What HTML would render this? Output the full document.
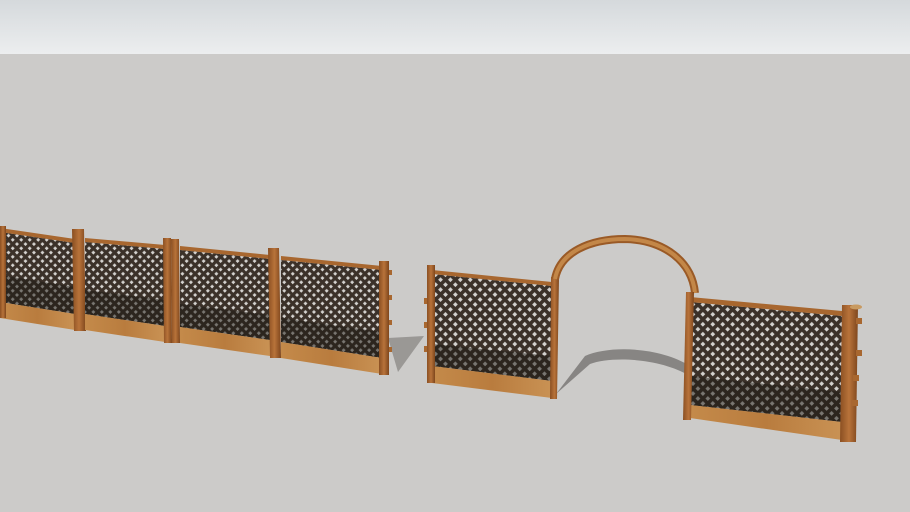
<!DOCTYPE html>
<html><head><meta charset="utf-8"><style>
html,body{margin:0;padding:0;width:910px;height:512px;overflow:hidden;background:#cccbc9}
svg{display:block}
</style></head><body>
<svg width="910" height="512" viewBox="0 0 910 512" xmlns="http://www.w3.org/2000/svg">
<defs>
<linearGradient id="sky" x1="0" y1="0" x2="0" y2="1">
<stop offset="0" stop-color="#d5d9dc"/><stop offset="1" stop-color="#eceeef"/>
</linearGradient>
<pattern id="lat" patternUnits="userSpaceOnUse" width="6" height="6" patternTransform="rotate(45)">
<rect width="6" height="6" fill="#d4d2cf"/>
<rect width="6" height="3.2" fill="#3b3129"/>
<rect width="3.2" height="6" fill="#3b3129"/>
</pattern>
<pattern id="lat2" patternUnits="userSpaceOnUse" width="7" height="7" patternTransform="rotate(45)">
<rect width="7" height="7" fill="#d4d2cf"/>
<rect width="7" height="3.6" fill="#3b3129"/>
<rect width="3.6" height="7" fill="#3b3129"/>
</pattern>
<linearGradient id="wood" x1="0" y1="0" x2="1" y2="0">
<stop offset="0" stop-color="#c48a4a"/><stop offset=".5" stop-color="#b97c3e"/><stop offset="1" stop-color="#c99254"/>
</linearGradient>
<linearGradient id="post" x1="0" y1="0" x2="1" y2="0">
<stop offset="0" stop-color="#8a4f22"/><stop offset=".5" stop-color="#b8733a"/><stop offset="1" stop-color="#7e461c"/>
</linearGradient>
</defs>
<rect width="910" height="54" fill="url(#sky)"/>
<rect y="54" width="910" height="458" fill="#cccbc9"/>

<polygon points="388,338 424,336 398,372" fill="#8d8b88" opacity=".8"/>
<path d="M556,394 L585,356 C610,345 660,347 690,366 L690,376 C660,358 612,356 590,364 Z" fill="#878583"/>

<polygon points="0,232 75,243 75,314 0,302" fill="url(#lat)"/>
<polygon points="0,275 75,287 75,314 0,302" fill="rgba(30,25,20,.5)"/>
<polygon points="0,228 75,239 75,243 0,232" fill="#a8672f"/>
<polygon points="0,302 75,314 75,330 0,318" fill="url(#wood)"/>
<rect x="0" y="226" width="6" height="92" fill="url(#post)"/>
<polygon points="72,229 84,229 86,331 74,331" fill="url(#post)"/>

<polygon points="85,242 165,249 165,326 85,314" fill="url(#lat)"/>
<polygon points="85,290 165,300 165,326 85,314" fill="rgba(30,25,20,.5)"/>
<polygon points="85,238 165,245 165,249 85,242" fill="#a8672f"/>
<polygon points="85,314 165,326 165,342 85,330" fill="url(#wood)"/>
<polygon points="163,238 171,238 172,343 164,343" fill="url(#post)"/>
<polygon points="171,239 179,239 180,343 172,343" fill="url(#post)"/>

<polygon points="180,250 270,259 270,340 180,327" fill="url(#lat)"/>
<polygon points="180,304 270,315 270,340 180,327" fill="rgba(30,25,20,.5)"/>
<polygon points="180,246 270,255 270,259 180,250" fill="#a8672f"/>
<polygon points="180,327 270,340 270,356 180,343" fill="url(#wood)"/>
<polygon points="268,248 279,248 281,358 270,358" fill="url(#post)"/>

<polygon points="281,260 382,270 382,358 281,342" fill="url(#lat)"/>
<polygon points="281,318 382,332 382,358 281,342" fill="rgba(30,25,20,.5)"/>
<polygon points="281,256 382,266 382,270 281,260" fill="#a8672f"/>
<polygon points="281,342 382,358 382,374 281,358" fill="url(#wood)"/>
<rect x="379" y="261" width="10" height="114" fill="url(#post)"/>
<rect x="389" y="270" width="3" height="5" fill="#a8672f"/>
<rect x="389" y="295" width="3" height="5" fill="#a8672f"/>
<rect x="389" y="320" width="3" height="5" fill="#a8672f"/>
<rect x="389" y="347" width="3" height="5" fill="#a8672f"/>

<polygon points="432,274 552,286 552,381 432,366" fill="url(#lat2)"/>
<polygon points="432,344 552,356 552,381 432,366" fill="rgba(30,25,20,.5)"/>
<polygon points="432,270 552,282 552,286 432,274" fill="#a8672f"/>
<polygon points="432,366 552,381 552,398 432,383" fill="url(#wood)"/>
<rect x="427" y="265" width="8" height="118" fill="url(#post)"/>
<rect x="424" y="298" width="3" height="6" fill="#a8672f"/>
<rect x="424" y="322" width="3" height="6" fill="#a8672f"/>
<rect x="424" y="346" width="3" height="6" fill="#a8672f"/>
<polygon points="551,277 559,277 557,399 550,399" fill="url(#post)"/>

<path d="M555,279 C560,252 590,239 625,239 C665,240 692,262 695,293" fill="none" stroke="#9a5a26" stroke-width="8"/>
<path d="M555,279 C560,252 590,239 625,239 C665,240 692,262 695,293" fill="none" stroke="#c38748" stroke-width="4"/>

<polygon points="690,302 842,316 842,422 690,405" fill="url(#lat2)"/>
<polygon points="690,376 842,392 842,422 690,405" fill="rgba(30,25,20,.5)"/>
<polygon points="690,297 842,311 842,316 690,302" fill="#a8672f"/>
<polygon points="690,405 842,422 842,440 690,418" fill="url(#wood)"/>
<polygon points="686,292 694,292 691,420 683,420" fill="url(#post)"/>
<polygon points="842,305 858,305 856,442 840,442" fill="url(#post)"/>
<ellipse cx="856" cy="307" rx="6" ry="2.5" fill="#c89a60"/>
<rect x="856" y="318" width="6" height="6" fill="#a8672f"/>
<rect x="856" y="350" width="6" height="6" fill="#a8672f"/>
<rect x="853" y="375" width="6" height="6" fill="#a8672f"/>
<rect x="852" y="400" width="6" height="6" fill="#a8672f"/>
</svg>
</body></html>
